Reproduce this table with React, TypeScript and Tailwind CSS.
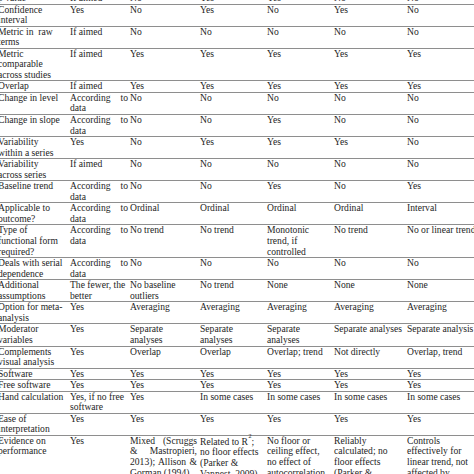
import React from "react";

type Row = React.ReactNode[];

const rows: Row[] = [
  ["p value", "If aimed", "No", "Yes", "Yes", "No", "No"],
  ["Confidence interval", "Yes", "No", "Yes", "No", "Yes", "No"],
  ["Metric in\u00a0 raw terms", "If aimed", "No", "No", "No", "No", "No"],
  ["Metric comparable across studies", "If aimed", "Yes", "Yes", "Yes", "Yes", "Yes"],
  ["Overlap", "If aimed", "Yes", "Yes", "Yes", "Yes", "Yes"],
  ["Change in level", "According to data", "No", "No", "No", "No", "No"],
  ["Change in slope", "According to data", "No", "No", "Yes", "No", "No"],
  ["Variability within a series", "Yes", "No", "Yes", "Yes", "Yes", "No"],
  ["Variability across series", "If aimed", "No", "No", "No", "No", "No"],
  ["Baseline trend", "According to data", "No", "No", "Yes", "No", "Yes"],
  ["Applicable to outcome?", "According to data", "Ordinal", "Ordinal", "Ordinal", "Ordinal", "Interval"],
  ["Type of functional form required?", "According to data", "No trend", "No trend", "Monotonic trend, if controlled", "No trend", "No or linear trend"],
  ["Deals with serial dependence", "According to data", "No", "No", "No", "No", "No"],
  ["Additional assumptions", "The fewer, the better", "No baseline outliers", "No trend", "None", "None", "None"],
  ["Option for meta-analysis", "Yes", "Averaging", "Averaging", "Averaging", "Averaging", "Averaging"],
  ["Moderator variables", "Yes", "Separate analyses", "Separate analyses", "Separate analyses", "Separate analyses", "Separate analysis"],
  ["Complements visual analysis", "Yes", "Overlap", "Overlap", "Overlap; trend", "Not directly", "Overlap, trend"],
  ["Software", "Yes", "Yes", "Yes", "Yes", "Yes", "Yes"],
  ["Free software", "Yes", "Yes", "Yes", "Yes", "Yes", "Yes"],
  ["Hand calculation", "Yes, if no free software", "Yes", "In some cases", "In some cases", "In some cases", "In some cases"],
  ["Ease of interpretation", "Yes", "Yes", "Yes", "Yes", "Yes", "Yes"],
  [
    "Evidence on performance",
    "Yes",
    "Mixed (Scruggs & Mastropieri, 2013); Allison & Gorman (1994)",
    <>
      Related to R<sup className="text-[6px] leading-none align-[4px] ml-[0.5px]">2</sup>; no floor effects (Parker &amp; Vannest, 2009)
    </>,
    "No floor or ceiling effect, no effect of autocorrelation",
    "Reliably calculated; no floor effects (Parker & Vannest, 2009)",
    "Controls effectively for linear trend, not affected by autocorrelation",
  ],
];

const cellClasses = [
  "w-[72px] pr-[6px]",
  "w-[60px] pr-[2px]",
  "w-[70px] pr-[3px]",
  "w-[67px] pr-[4px]",
  "w-[67px] pr-[5px]",
  "w-[73px] pr-[3px]",
  "w-[72px] pr-0",
];

function isJustified(i: number, j: number, cell: React.ReactNode) {
  if (j === 1 && cell === "According to data") return true;
  if (i === rows.length - 1 && j === 2) return true;
  return false;
}

export default function App() {
  return (
    <div className="w-[474px] h-[474px] overflow-hidden bg-white">
      <div
        className="ml-[-2px] mt-[-7px] w-[481px] text-[9.6px] leading-[10.55px] text-[#1e1e1e]"
        style={{ fontFamily: '"Liberation Serif", "Times New Roman", serif' }}
      >
        {rows.map((row, i) => (
          <div key={i} className="flex border-b border-[#8e8e8e]">
            {row.map((cell, j) => (
              <div
                key={j}
                className={`shrink-0 ${isJustified(i, j, cell) ? "text-justify" : "text-left"} ${cellClasses[j]}`}
              >
                {cell}
              </div>
            ))}
          </div>
        ))}
      </div>
    </div>
  );
}
